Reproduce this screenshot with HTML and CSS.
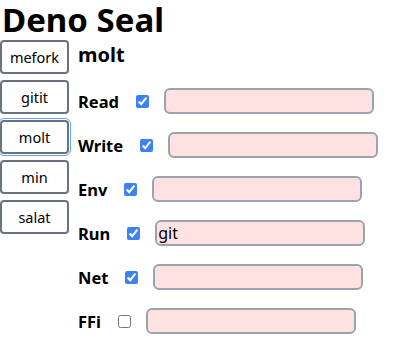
FILE: index.html
```html
<!DOCTYPE html>
<html>
<head>
<meta charset="utf-8">
<link rel="stylesheet" href="styles.css">
</head>
<body>
<h1 class="title">Deno Seal</h1>
<div class="main">
  <div class="sidebar">
    <button class="item">mefork</button>
    <button class="item">gitit</button>
    <button class="item active">molt</button>
    <button class="item">min</button>
    <button class="item">salat</button>
  </div>
  <div class="content">
    <h2 class="name">molt</h2>
    <div class="row"><span class="label">Read</span><input type="checkbox" class="check" checked><input type="text" class="field"></div>
    <div class="row"><span class="label">Write</span><input type="checkbox" class="check" checked><input type="text" class="field"></div>
    <div class="row"><span class="label">Env</span><input type="checkbox" class="check" checked><input type="text" class="field"></div>
    <div class="row"><span class="label">Run</span><input type="checkbox" class="check" checked><input type="text" class="field" value="git"></div>
    <div class="row"><span class="label">Net</span><input type="checkbox" class="check" checked><input type="text" class="field"></div>
    <div class="row"><span class="label">FFi</span><input type="checkbox" class="check"><input type="text" class="field"></div>
  </div>
</div>
</body>
</html>
```
FILE: styles.css
```css
* { box-sizing: border-box; }
body {
  margin: 0;
  font-family: "Noto Sans", "Open Sans", sans-serif;
  color: #000;
  background: #fff;
}
.title {
  margin: 0;
  padding-left: 2px;
  font-size: 33px;
  font-weight: 700;
  line-height: 40px;
  height: 40px;
}
.main {
  display: flex;
  gap: 9px;
  align-items: flex-start;
}
.sidebar {
  display: flex;
  flex-direction: column;
  gap: 6px;
}
.item {
  width: 69px;
  height: 34px;
  border: 2px solid #6b7280;
  border-radius: 4px;
  background: #fff;
  font-family: inherit;
  font-size: 14.5px;
  color: #000;
  padding: 0;
}
.item.active {
  outline: 1px solid #60a5fa;
  outline-offset: 1px;
}
.content {
  display: flex;
  flex-direction: column;
  gap: 18px;
}
.name {
  margin: 0;
  font-size: 20px;
  font-weight: 700;
  line-height: 30px;
  height: 30px;
}
.row {
  display: flex;
  align-items: center;
  height: 26px;
}
.label {
  font-size: 16.5px;
  font-weight: 700;
}
.check {
  width: 13px;
  height: 13px;
  margin: 0 15px 0 17px;
  accent-color: #3b82f6;
}
.field {
  width: 210px;
  height: 26px;
  border: 2px solid #9ca3af;
  border-radius: 6px;
  background: #fee2e2;
  font-family: inherit;
  font-size: 16px;
  padding: 0 0 0 1px;
  color: #000;
}
```
